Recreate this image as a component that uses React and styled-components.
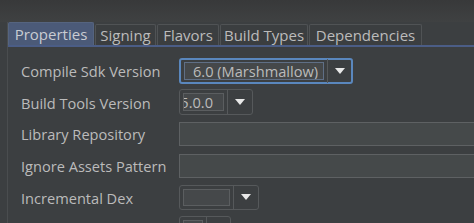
import React from "react";
import styled, { createGlobalStyle } from "styled-components";

const GlobalStyle = createGlobalStyle`
    html, body {
        margin: 0;
        padding: 0;
        background: #3c3f41;
    }
    body {
        font-family: "Open Sans", "DejaVu Sans", sans-serif;
        overflow: hidden;
    }
`;

const Window = styled.div`
    width: 474px;
    height: 223px;
    overflow: hidden;
    background: #3c3f41;
    display: flex;
    flex-direction: column;
`;

const TopStrip = styled.div`
    height: 22px;
    flex: none;
    background: linear-gradient(#38393a, #3f4142);
`;

const Panel = styled.div`
    flex: 1;
    margin-left: 7px;
    border-left: 1px solid #4a4d4f;
    display: flex;
    flex-direction: column;
`;

const TabBar = styled.div`
    display: flex;
    align-items: flex-end;
    gap: 1px;
    height: 23px;
    border-bottom: 2px solid #4b5d86;
`;

const Tab = styled.div`
    box-sizing: border-box;
    width: ${(p) => p.$w}px;
    height: ${(p) => (p.$active ? 23 : 21)}px;
    display: flex;
    align-items: center;
    justify-content: center;
    font-size: 15px;
    color: ${(p) => (p.$active ? "#c9ccd2" : "#bbbbbb")};
    background: ${(p) => (p.$active ? "#4b5a78" : "#3b3e40")};
    border: 1px solid ${(p) => (p.$active ? "#55647f" : "#505355")};
    border-bottom: none;
    border-radius: 2px 2px 0 0;
`;

const Form = styled.div`
    padding: 8px 0 0 13px;
    display: grid;
    grid-template-columns: 158px 1fr;
    grid-auto-rows: 31.6px;
    align-items: center;
`;

const Label = styled.div`
    font-size: 14.6px;
    color: #bbbbbb;
    white-space: nowrap;
    padding-top: 1px;
`;

const TextField = styled.div`
    height: 24px;
    box-sizing: border-box;
    margin-right: -20px;
    background: #45494a;
    border: 1px solid #5e6163;
`;

const Combo = styled.div`
    box-sizing: border-box;
    width: ${(p) => p.$w}px;
    height: ${(p) => p.$h || 26}px;
    display: flex;
    border: ${(p) => (p.$focus ? "2px solid #5a87bd" : "1px solid #56595b")};
    border-radius: 3px;
    padding: ${(p) => (p.$focus ? "2px 0 2px 3px" : "3px 0 3px 3px")};
    background: #3c3f41;
`;

const ComboField = styled.div`
    flex: 1;
    min-width: 0;
    box-sizing: border-box;
    border: 1px solid ${(p) => (p.$focus ? "#5f6f86" : "#5b5e60")};
    background: #45484a;
    overflow: hidden;
    display: flex;
    align-items: center;
    font-size: 14.6px;
    color: #bbbbbb;
    white-space: nowrap;
    padding-left: ${(p) => (p.$scroll ? 0 : 8)}px;
`;

/* text scrolled inside a narrow field, its start hidden at the left */
const ScrolledText = styled.span`
    flex: none;
    margin-left: ${(p) => -p.$offset}px;
`;

const ArrowButton = styled.div`
    width: ${(p) => p.$w || 23}px;
    flex: none;
    margin: -3px 0;
    margin-left: 3px;
    border-left: 1px solid #56595b;
    display: flex;
    align-items: center;
    justify-content: center;
    &::after {
        content: "";
        border-left: 5px solid transparent;
        border-right: 5px solid transparent;
        border-top: 6px solid #e8e8e8;
    }
`;

const tabs = [
    ["Properties", 86],
    ["Signing", 61],
    ["Flavors", 62],
    ["Build Types", 88],
    ["Dependencies", 113],
];

const App = () => {
    return (
        <Window>
            <GlobalStyle />
            <TopStrip />
            <Panel>
                <TabBar>
                    {tabs.map(([name, w], i) => (
                        <Tab key={name} $w={w} $active={i === 0}>
                            {name}
                        </Tab>
                    ))}
                </TabBar>
                <Form>
                    <Label>Compile Sdk Version</Label>
                    <div>
                        <Combo $w={174} $focus>
                            <ComboField $focus>6.0 (Marshmallow)</ComboField>
                            <ArrowButton />
                        </Combo>
                    </div>

                    <Label>Build Tools Version</Label>
                    <div>
                        <Combo $w={74}>
                            <ComboField $scroll>
                                <ScrolledText $offset={12}>25.0.0</ScrolledText>
                            </ComboField>
                            <ArrowButton $w={24} />
                        </Combo>
                    </div>

                    <Label>Library Repository</Label>
                    <TextField />

                    <Label>Ignore Assets Pattern</Label>
                    <TextField />

                    <Label>Incremental Dex</Label>
                    <div>
                        <Combo $w={80} $h={25}>
                            <ComboField />
                            <ArrowButton $w={24} />
                        </Combo>
                    </div>

                    <Label />
                    <div>
                        <Combo $w={52}>
                            <ComboField />
                            <ArrowButton $w={23} />
                        </Combo>
                    </div>
                </Form>
            </Panel>
        </Window>
    );
};

export default App;
